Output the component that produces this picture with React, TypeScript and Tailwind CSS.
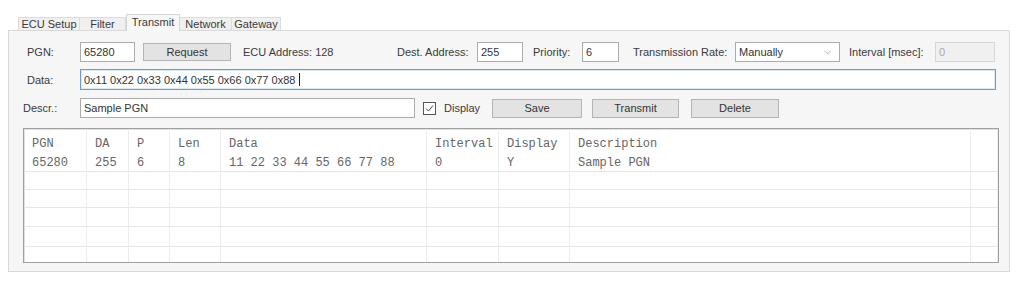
import { ChevronDown } from "lucide-react"

const tabs = ["ECU Setup", "Filter", "Transmit", "Network", "Gateway"]
const tabWidths = ["w-[62px]", "w-[47px]", "w-[54px]", "w-[53px]", "w-[50px]"]

const columns = [
  { title: "PGN", w: "w-[63px]" },
  { title: "DA", w: "w-[42px]" },
  { title: "P", w: "w-[41px]" },
  { title: "Len", w: "w-[51px]" },
  { title: "Data", w: "w-[206px]" },
  { title: "Interval", w: "w-[72px]" },
  { title: "Display", w: "w-[71px]" },
  { title: "Description", w: "w-[401px]" },
  { title: "", w: "flex-1" },
]

const row = ["65280", "255", "6", "8", "11 22 33 44 55 66 77 88", "0", "Y", "Sample PGN", ""]

function Btn({ label, className }: { label: string; className?: string }) {
  return (
    <div
      className={
        "flex items-center justify-center border border-[#b4b4b4] bg-[#e3e3e3] text-[#333] " +
        (className ?? "")
      }
    >
      {label}
    </div>
  )
}

function Box({ value, className }: { value: string; className?: string }) {
  return (
    <div
      className={
        "flex items-center border border-[#ababab] bg-white pl-[3px] text-[#333] " + (className ?? "")
      }
    >
      {value}
    </div>
  )
}

export default function App() {
  return (
    <div
      className="w-[1028px] h-[282px] bg-white pl-[8px] pt-[14px] text-[11px] leading-[14px] text-[#3a3a3a]"
      style={{ fontFamily: '"Liberation Sans", Arial, sans-serif' }}
    >
      {/* tab strip */}
      <div className="flex items-end h-[16px] pl-[10px]">
        {tabs.map((t, i) => {
          const active = t === "Transmit"
          return (
            <div
              key={t}
              className={
                "flex items-center justify-center border border-b-0 " +
                tabWidths[i] +
                (active
                  ? " h-[17px] -mb-px relative z-10 border-[#d4d4d4] bg-[#f7f7f7] pb-[3px]"
                  : " h-[13px] border-[#dcdcdc] bg-[#f0f0f0] -ml-px first:ml-0")
              }
            >
              {t}
            </div>
          )
        })}
      </div>

      {/* panel */}
      <div className="w-[1002px] h-[242px] border border-[#d9d9d9] bg-[#f6f6f6] pt-[11px]">
        {/* row 1 */}
        <div className="flex items-center h-[20px]">
          <span className="w-[71px] pl-[18px]">PGN:</span>
          <Box value="65280" className="w-[55px] h-[20px]" />
          <Btn label="Request" className="ml-[8px] w-[88px] h-[18px]" />
          <span className="ml-[12px] w-[154px]">ECU Address: 128</span>
          <span className="w-[80px]">Dest. Address:</span>
          <Box value="255" className="w-[46px] h-[20px]" />
          <span className="ml-[10px] w-[49px]">Priority:</span>
          <Box value="6" className="w-[37px] h-[20px]" />
          <span className="ml-[14px] w-[102px]">Transmission Rate:</span>
          <div className="flex items-center justify-between w-[105px] h-[20px] border border-[#ababab] bg-white pl-[3px] pr-[6px] text-[#333]">
            <span>Manually</span>
            <ChevronDown size={11} strokeWidth={1.2} className="text-[#777]" />
          </div>
          <span className="ml-[9px] w-[86px]">Interval [msec]:</span>
          <div className="flex items-center w-[60px] h-[20px] border border-[#d6d6d6] bg-[#f0f0f0] pl-[3px] text-[#a8a8a8]">
            0
          </div>
        </div>

        {/* row 2 */}
        <div className="flex items-center h-[21px] mt-[7px]">
          <span className="w-[71px] pl-[18px]">Data:</span>
          <div className="flex items-center w-[916px] h-[21px] border border-[#6b9fbf] bg-white pl-[3px] text-[#333] shadow-[inset_0_0_0_1px_#d8ecf6]">
            0x11 0x22 0x33 0x44 0x55 0x66 0x77 0x88
            <span className="ml-[4px] h-[13px] border-l border-[#222]" />
          </div>
        </div>

        {/* row 3 */}
        <div className="flex items-center h-[20px] mt-[8px]">
          <span className="w-[71px] pl-[14px]">Descr.:</span>
          <Box value="Sample PGN" className="w-[335px] h-[20px]" />
          <div className="ml-[8px] flex items-center justify-center w-[13px] h-[13px] border border-[#555] bg-white">
            <svg width="11" height="11" viewBox="0 0 11 11">
              <path d="M2 5.5 L4.5 8 L9 2.5" fill="none" stroke="#444" strokeWidth="1" />
            </svg>
          </div>
          <span className="ml-[8px] w-[48px]">Display</span>
          <Btn label="Save" className="w-[90px] h-[19px]" />
          <Btn label="Transmit" className="ml-[10px] w-[87px] h-[19px]" />
          <Btn label="Delete" className="ml-[12px] w-[88px] h-[19px]" />
        </div>

        {/* list */}
        <div
          className="ml-[14px] mt-[10px] w-[976px] h-[135px] border border-[#a0a0a0] bg-white text-[12px] text-[#666] flex flex-col overflow-hidden shadow-[inset_1px_1px_0_#e0e0e0]"
          style={{ fontFamily: '"Liberation Mono", "Courier New", monospace' }}
        >
          <div className="flex h-[23px]">
            {columns.map((c, i) => (
              <div key={i} className={"border-r border-[#ececec] pl-[8px] pt-[8px] " + c.w}>
                {c.title}
              </div>
            ))}
          </div>
          <div className="flex h-[20px] border-b border-[#e6e6e6]">
            {columns.map((c, i) => (
              <div key={i} className={"border-r border-[#ececec] pl-[8px] pt-[4px] " + c.w}>
                {row[i]}
              </div>
            ))}
          </div>
          {[18, 18, 19, 20].map((h, r) => (
            <div
              key={r}
              className="flex border-b border-[#e6e6e6]"
              style={{ height: h }}
            >
              {columns.map((c, i) => (
                <div key={i} className={"border-r border-[#ececec] " + c.w} />
              ))}
            </div>
          ))}
          <div className="flex flex-1">
            {columns.map((c, i) => (
              <div key={i} className={"border-r border-[#ececec] " + c.w} />
            ))}
          </div>
        </div>
      </div>
    </div>
  )
}
